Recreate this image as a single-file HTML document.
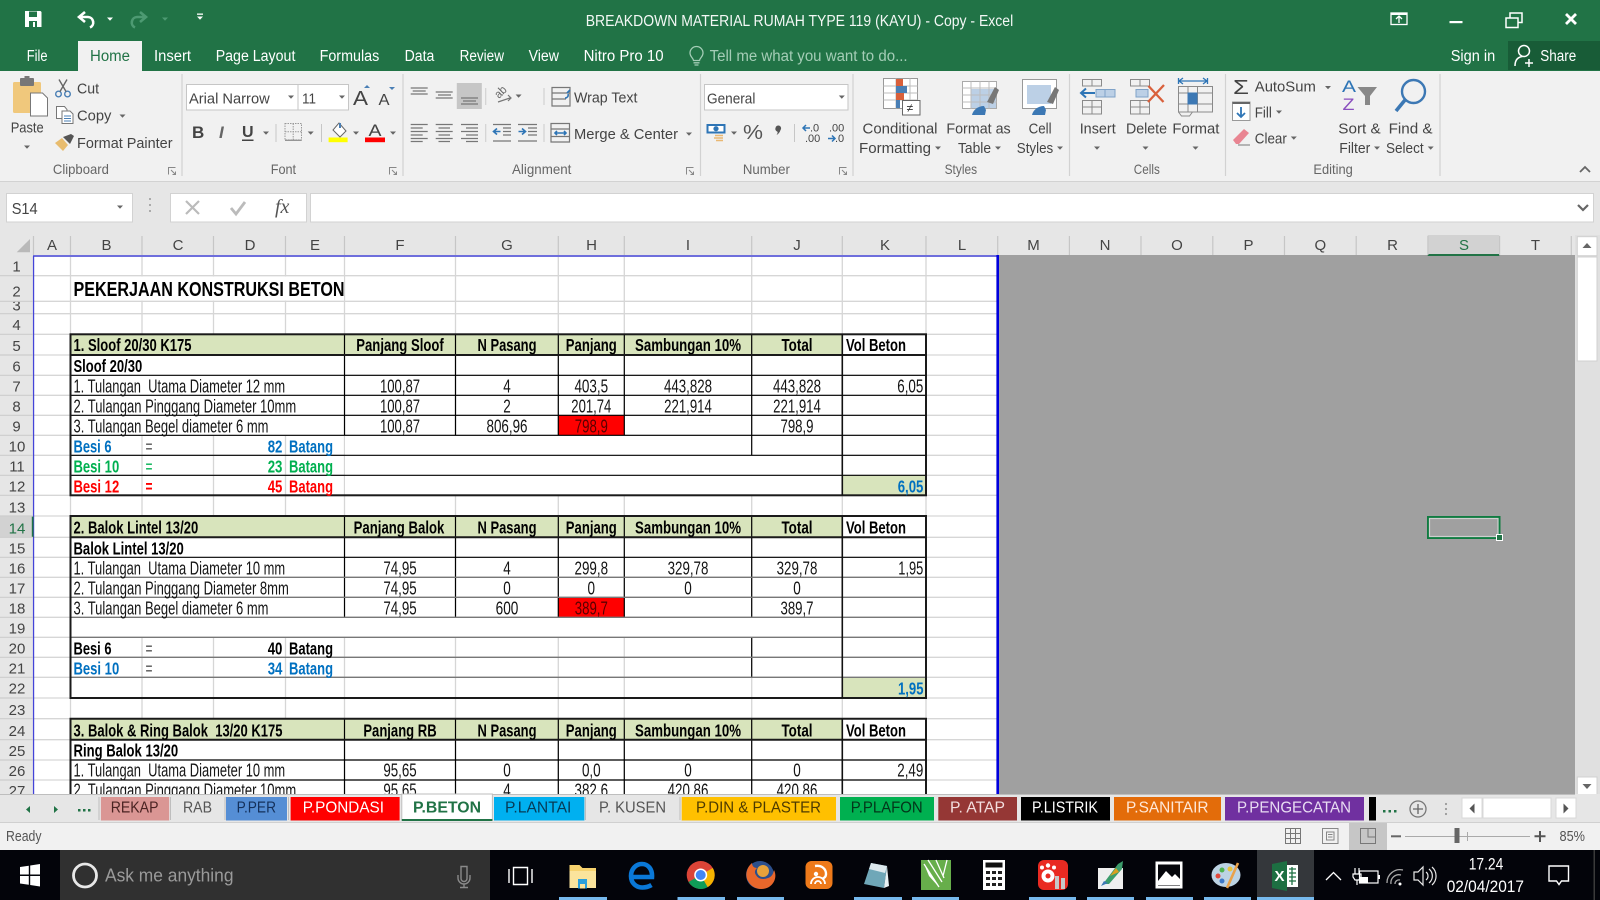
<!DOCTYPE html>
<html lang="en"><head><meta charset="utf-8"><title>BREAKDOWN MATERIAL RUMAH TYPE 119 (KAYU) - Copy - Excel</title>
<style>
html,body{margin:0;padding:0;background:#E6E6E6;width:1600px;height:900px;overflow:hidden}
svg{display:block;position:absolute;left:0;top:0;filter:blur(.3px)}
text{font-family:"Liberation Sans",Arial,sans-serif;white-space:pre}
.s{font-size:18px;fill:#151515}
.b{font-size:17.5px;font-weight:700;fill:#000}
.m{text-anchor:middle}
.bl{fill:#0070C0}.gr{fill:#00B050}.rd{fill:#FF0000}
.h{font-size:15px;fill:#444;text-anchor:middle}
.r{font-size:15px;fill:#444}
.t{font-size:15.5px;fill:#fff}
.g{font-size:14px;fill:#666}
.tb{font-size:15.5px}
</style></head><body>
<svg xmlns="http://www.w3.org/2000/svg" width="1600" height="900" viewBox="0 0 1600 900">
<defs>
<path id="a" d="M-3 -1.5h6l-3 3.2z" fill="#666"/>
<path id="w" d="M-3 -1.5h6l-3 3.2z" fill="#fff"/>
</defs>
<!-- base -->
<rect width="1600" height="900" fill="#E6E6E6"/>
<rect width="1600" height="71" fill="#217346"/>
<rect y="71" width="1600" height="110" fill="#F1F1F1"/>
<rect y="181" width="1600" height="1" fill="#D2D2D2"/>
<rect x="78" y="41" width="64" height="30" fill="#F1F1F1"/>
<rect x="1508" y="41" width="92" height="29" fill="#185C37"/>

<!-- QAT -->
<path d="M25 11h15.500l1 1v15h-16.500z" fill="#fff"/><rect x="29" y="11.500" width="8" height="5.500" fill="#217346"/><rect x="29" y="21" width="8" height="6" fill="#217346"/><rect x="33" y="22" width="2" height="5" fill="#fff"/>
<path d="M85 12l-6 5 6 5M79 17h9a5.500 5.500 0 0 1 2 10.500" fill="none" stroke="#fff" stroke-width="2.600"/>
<use href="#w" x="110" y="19"/>
<path d="M140 12l6 5-6 5M146 17h-9a5.500 5.500 0 0 0-2 10.500" fill="none" stroke="#4D9A72" stroke-width="2.600"/>
<path d="M162 17.500h6l-3 3.200z" fill="#4D9A72"/>
<rect x="197" y="13.500" width="6" height="1.300" fill="#fff"/><use href="#w" x="200" y="18"/>
<text class="t" x="585.700" y="26" textLength="427.500" lengthAdjust="spacingAndGlyphs" fill-opacity=".95">BREAKDOWN MATERIAL RUMAH TYPE 119 (KAYU) - Copy - Excel</text>
<!-- window controls -->
<rect x="1391" y="13" width="16" height="11.500" fill="none" stroke="#fff" stroke-width="1.300"/><rect x="1391" y="13" width="16" height="2" fill="#fff"/><path d="M1399 23v-6M1396 19l3-3 3 3" fill="none" stroke="#fff" stroke-width="1.300"/>
<rect x="1449.500" y="21" width="13" height="2.200" fill="#fff"/>
<rect x="1506" y="18" width="12" height="9.500" fill="none" stroke="#fff" stroke-width="1.500"/><path d="M1510 17.500v-4.500h12v9.500h-4" fill="none" stroke="#fff" stroke-width="1.500"/>
<path d="M1566 14l10 10M1576 14l-10 10" stroke="#fff" stroke-width="2.800"/>
<!-- tabs -->
<g class="t">
<text class="t" x="26.800" y="61" textLength="20.700" lengthAdjust="spacingAndGlyphs">File</text>
<text class="t" x="90" y="61" textLength="40" lengthAdjust="spacingAndGlyphs" style="fill:#217346">Home</text>
<text class="t" x="154" y="61" textLength="37" lengthAdjust="spacingAndGlyphs">Insert</text>
<text class="t" x="215.700" y="61" textLength="79.700" lengthAdjust="spacingAndGlyphs">Page Layout</text>
<text class="t" x="319.600" y="61" textLength="59.700" lengthAdjust="spacingAndGlyphs">Formulas</text>
<text class="t" x="404.600" y="61" textLength="29.700" lengthAdjust="spacingAndGlyphs">Data</text>
<text class="t" x="459.600" y="61" textLength="44.400" lengthAdjust="spacingAndGlyphs">Review</text>
<text class="t" x="528.600" y="61" textLength="30.400" lengthAdjust="spacingAndGlyphs">View</text>
<text class="t" x="583.600" y="61" textLength="80" lengthAdjust="spacingAndGlyphs">Nitro Pro 10</text>
<text class="t" x="709.600" y="61" textLength="198" lengthAdjust="spacingAndGlyphs" style="fill:#A4CDB6">Tell me what you want to do...</text>
<text class="t" x="1450.700" y="61" textLength="44.500" lengthAdjust="spacingAndGlyphs">Sign in</text>
<text class="t" x="1540.300" y="61" textLength="36" lengthAdjust="spacingAndGlyphs">Share</text>
</g>
<path d="M693.500 60.500c-.2-2.500-3.500-3.800-3.500-7.500a6.500 6.500 0 0 1 13 0c0 3.700-3.300 5-3.500 7.500zM693.500 62.800h6M694.500 65h4" fill="none" stroke="#A4CDB6" stroke-width="1.300"/>
<circle cx="1524" cy="51" r="5.500" fill="none" stroke="#fff" stroke-width="1.500"/><path d="M1515 66c0-6 3-9 7.500-9.500M1525 63h8M1529 59v8" fill="none" stroke="#fff" stroke-width="1.500"/>

<!-- ribbon separators -->
<path d="M182 74v102M403 74v102M700.500 74v102M853 74v102M1069.500 74v102M1225.500 74v102M1440 74v102" stroke="#D2D2D2" stroke-width="1.200"/>
<!-- group labels -->
<text class="g" x="52.900" y="174" textLength="56" lengthAdjust="spacingAndGlyphs">Clipboard</text>
<text class="g" x="270.700" y="174" textLength="25.400" lengthAdjust="spacingAndGlyphs">Font</text>
<text class="g" x="512" y="174" textLength="59.400" lengthAdjust="spacingAndGlyphs">Alignment</text>
<text class="g" x="742.900" y="174" textLength="47" lengthAdjust="spacingAndGlyphs">Number</text>
<text class="g" x="944.600" y="174" textLength="32.500" lengthAdjust="spacingAndGlyphs">Styles</text>
<text class="g" x="1133.800" y="174" textLength="26" lengthAdjust="spacingAndGlyphs">Cells</text>
<text class="g" x="1313.400" y="174" textLength="39.400" lengthAdjust="spacingAndGlyphs">Editing</text>
<g fill="none" stroke="#888" stroke-width="1"><path d="M168.500 174.500v-7h7M171 170l4 4M175.500 171.500v3h-3"/><path d="M389.500 174.500v-7h7M392 170l4 4M396.500 171.500v3h-3"/><path d="M686.500 174.500v-7h7M689 170l4 4M693.500 171.500v3h-3"/><path d="M839.500 174.500v-7h7M842 170l4 4M846.500 171.500v3h-3"/></g>
<path d="M1580 172l5-5 5 5" fill="none" stroke="#666" stroke-width="1.800"/>

<!-- clipboard -->
<rect x="13" y="82" width="28" height="31" rx="1.500" fill="#F0C87C"/><rect x="20" y="78" width="14" height="8" rx="1" fill="#777"/><rect x="24.500" y="76" width="5" height="4" fill="#777"/>
<path d="M30.500 93h12l5 5v18h-17z" fill="#fff" stroke="#777" stroke-width="1"/>
<text class="r" x="10.700" y="132.300" textLength="33" lengthAdjust="spacingAndGlyphs">Paste</text><use href="#a" x="27" y="147"/>
<g fill="none" stroke-width="1.400"><circle cx="58.500" cy="94" r="2.800" stroke="#4A7FB5"/><circle cx="67.500" cy="94" r="2.800" stroke="#4A7FB5"/><path d="M60 91.500l7-12M66 91.500l-7-12" stroke="#666"/></g>
<text class="r" x="77" y="93.300" textLength="22" lengthAdjust="spacingAndGlyphs">Cut</text>
<path d="M56.500 106.500h8l2.500 3v9h-10.500z" fill="#fff" stroke="#777"/><path d="M62 111h8l3 3v9.500h-11z" fill="#fff" stroke="#777"/><path d="M64 116h7M64 118.500h7M64 121h7" stroke="#4A7FB5"/>
<text class="r" x="77" y="120.500" textLength="34.400" lengthAdjust="spacingAndGlyphs">Copy</text><use href="#a" x="122.500" y="116"/>
<path d="M55 143l7-5 6 7-5 6z" fill="#E8BC6E"/><path d="M63 137l8-3 3 2-4 8z" fill="#555"/>
<text class="r" x="77" y="148" textLength="95.500" lengthAdjust="spacingAndGlyphs">Format Painter</text>

<!-- font -->
<rect x="186.500" y="84.500" width="162" height="25.500" fill="#fff" stroke="#C6C6C6"/><path d="M298 84v26" stroke="#C6C6C6"/>
<text class="r" x="189" y="103.300" textLength="80.700" lengthAdjust="spacingAndGlyphs">Arial Narrow</text><use href="#a" x="291" y="97"/>
<text class="r" x="302" y="103.300" textLength="14" lengthAdjust="spacingAndGlyphs">11</text><use href="#a" x="342" y="97"/>
<text class="r" x="353" y="105" style="font-size:20px" textLength="15" lengthAdjust="spacingAndGlyphs">A</text><path d="M364 88l3-3 3 3z" fill="#4A7FB5"/>
<text class="r" x="378.500" y="105" style="font-size:16px" textLength="11" lengthAdjust="spacingAndGlyphs">A</text><path d="M389 87l3 3 3-3z" fill="#4A7FB5"/>
<text x="192" y="138" style="font-size:17px;font-weight:700;fill:#444">B</text>
<text x="219" y="138" style="font-size:17px;font-style:italic;font-weight:700;fill:#666">I</text>
<text x="242" y="137" style="font-size:16px;font-weight:700;fill:#444">U</text><rect x="242" y="139.500" width="11.500" height="1.500" fill="#444"/><use href="#a" x="266" y="133"/>
<path d="M276 124v18M321.500 124v18" stroke="#C6C6C6"/>
<path d="M285 123.500h16.500v16.500h-16.500zM293.200 123.500v16.500M285 131.700h16.500" fill="none" stroke="#999" stroke-dasharray="1.500 1"/><path d="M285 140.200h16.500" stroke="#777"/><use href="#a" x="310.700" y="133"/>
<path d="M339 123l7 8-6 6-7-7z" fill="#fff" stroke="#666"/><path d="M340 123v5" stroke="#4A7FB5" stroke-width="2"/>
<rect x="328.600" y="137.500" width="19" height="4.700" fill="#FFFF00"/><use href="#a" x="356" y="133"/>
<text x="368.500" y="136" style="font-size:17px;fill:#444" textLength="13" lengthAdjust="spacingAndGlyphs">A</text><rect x="365" y="137.500" width="20" height="4.700" fill="#FF0000"/><use href="#a" x="393" y="133"/>

<!-- alignment -->
<rect x="456.800" y="83" width="25" height="26" fill="#C6C6C6"/>
<path d="M485.700 88v17M485.700 124v18M544 88v17M544 124v18" stroke="#D2D2D2" stroke-width="1.200"/>
<g stroke="#777" stroke-width="1.200" fill="none">
<path d="M410.700 88h17M412.700 91h13M410.700 94h17"/>
<path d="M435.700 92h17M438 95h13M435.700 98h17"/>
<path d="M461 98h17M463 101h13M461 104h17"/>
<path d="M410.700 124.500h17M410.700 128h12M410.700 131.500h17M410.700 135h12M410.700 138.500h17M410.700 141.500h12"/>
<path d="M435.700 124.500h17M438.500 128h11.500M435.700 131.500h17M438.500 135h11.500M435.700 138.500h17M438.500 141.500h11.500"/>
<path d="M461 124.500h17M466 128h12M461 131.500h17M466 135h12M461 138.500h17M466 141.500h12"/>
<path d="M493 124.500h18M503 128h8M503 131.500h8M503 135h8M493 141h18M518 124.500h19M518 141h19M528 128h9M528 131.500h9M528 135h9"/>
<path d="M552 87.500h18v18.500h-18zM552 93h18M552 99h14"/><path d="M551 123.500h18.500v18.500h-18.500zM551 129h18.500M551 136.500h18.500"/>
<path d="M498 102l12-4M508 95l3 3-3 3"/></g>
<text x="0" y="0" transform="translate(499 99) rotate(-45)" style="font-size:12px;fill:#666" textLength="12" lengthAdjust="spacingAndGlyphs">ab</text>
<use href="#a" x="518.600" y="96"/>
<path d="M493.500 131.500h7M497 128.500l-3.500 3 3.500 3M518.500 131.500h7M522 128.500l3.500 3-3.500 3M555 133h11M557 131l-2 2 2 2M564 131l2 2-2 2M567 93l3-3M565 98a3 3 0 0 0 3-4" fill="none" stroke="#2E75B6" stroke-width="1.600"/>
<text class="r" x="574" y="102.300" textLength="63.500" lengthAdjust="spacingAndGlyphs">Wrap Text</text>
<text class="r" x="574" y="139" textLength="104" lengthAdjust="spacingAndGlyphs">Merge &amp; Center</text><use href="#a" x="689" y="134"/>

<!-- number -->
<rect x="704.500" y="84.500" width="143.500" height="25.500" fill="#fff" stroke="#C6C6C6"/>
<text class="r" x="707" y="103.300" textLength="48.400" lengthAdjust="spacingAndGlyphs">General</text><use href="#a" x="841.800" y="97"/>
<rect x="706.500" y="124" width="19" height="9.500" fill="#2E75B6"/><rect x="708.500" y="126" width="15" height="5.500" fill="#fff"/><circle cx="716" cy="128.700" r="2.600" fill="#2E75B6"/>
<g fill="none" stroke="#E9B873" stroke-width="1.400"><path d="M715 135.500h8M714 138h9M716 140.500h7"/></g><use href="#a" x="734" y="133"/>
<text x="743" y="139" style="font-size:20px;fill:#555" textLength="20" lengthAdjust="spacingAndGlyphs">%</text>
<path d="M775.500 128a2.800 2.800 0 1 1 5 2c-.5 2-2 4-4 5 1-1.500 1.300-2.500 1-3.300a2.800 2.800 0 0 1-2-3.700z" fill="#555"/>
<path d="M794.500 124v18" stroke="#C6C6C6"/>
<text x="810" y="131.500" style="font-size:11px;fill:#444">.0</text><text x="805" y="142" style="font-size:11px;fill:#444">.00</text>
<text x="829" y="131.500" style="font-size:11px;fill:#444">.00</text><text x="835" y="142" style="font-size:11px;fill:#444">.0</text>
<path d="M803 128h7M806 125l-3 3 3 3M828 138.500h7M832 135.500l3 3-3 3" fill="none" stroke="#2E75B6" stroke-width="1.500"/>

<!-- styles -->
<g>
<rect x="883.500" y="78.500" width="34" height="30" fill="#fff" stroke="#999"/><path d="M883.500 86h34M883.500 93h34M883.500 100h34M896 78.500v30M910 78.500v30" stroke="#BDBDBD"/>
<rect x="896" y="79" width="7" height="7" fill="#D9603B"/><rect x="896" y="86" width="11" height="7" fill="#4A7FB5"/><rect x="896" y="93" width="8" height="7" fill="#D9603B"/><rect x="896" y="100" width="4" height="8" fill="#4A7FB5"/>
<rect x="902.500" y="100.500" width="17.500" height="14.500" fill="#fff" stroke="#666"/><text x="906.500" y="112" style="font-size:12px;fill:#333">≠</text>
<rect x="962.500" y="81.500" width="34" height="27" fill="#fff" stroke="#AAA"/><rect x="971" y="89" width="25" height="19" fill="#BCD0E6"/><path d="M962.500 88h34M962.500 95h34M962.500 102h34M971 81.500v27M980 81.500v27M989 81.500v27" stroke="#BDBDBD"/><path d="M987 102l8-15 4 3-6 14z" fill="#777"/><path d="M972 115c1-5 6-9 12-9l2 4-1 5z" fill="#3C78B4"/>
<rect x="1022.500" y="79.500" width="34" height="29" fill="#fff" stroke="#999"/><rect x="1027" y="85" width="24" height="19" fill="#BCD0E6"/><path d="M1047 102l8-15 4 3-6 14z" fill="#777"/><path d="M1032 115c1-5 6-9 12-9l2 4-1 5z" fill="#3C78B4"/>
</g>
<text class="r" x="862.500" y="133.300" textLength="75" lengthAdjust="spacingAndGlyphs">Conditional</text>
<text class="r" x="859" y="153" textLength="72" lengthAdjust="spacingAndGlyphs">Formatting</text><use href="#a" x="938" y="148"/>
<text class="r" x="946.400" y="133.300" textLength="64.300" lengthAdjust="spacingAndGlyphs">Format as</text>
<text class="r" x="958" y="153" textLength="33" lengthAdjust="spacingAndGlyphs">Table</text><use href="#a" x="998" y="148"/>
<text class="r" x="1028.600" y="133.300" textLength="23" lengthAdjust="spacingAndGlyphs">Cell</text>
<text class="r" x="1016.800" y="153" textLength="36.400" lengthAdjust="spacingAndGlyphs">Styles</text><use href="#a" x="1060" y="148"/>

<!-- cells -->
<g fill="none" stroke="#8A8A8A">
<path d="M1082.500 79.500h19v6.500h-19zM1092 79.500v6.500M1082.500 100.500h19v13.500h-19zM1082.500 107h19M1092 100.500v13.500"/>
<path d="M1130.500 79.500h19v6.500h-19zM1140 79.500v6.500M1130.500 100.500h19v13.500h-19zM1130.500 107h19M1140 100.500v13.500"/>
<path d="M1178.500 86.500h34v25.500h-34zM1178.500 93h34M1178.500 104h34M1188 86.500v25.500M1197.500 86.500v25.500M1178.500 112l3 4h8l3-4"/>
</g>
<rect x="1096" y="89.500" width="9" height="7.500" fill="#BCD0E6" stroke="#7FA2C8"/><rect x="1105" y="89.500" width="10" height="7.500" fill="#BCD0E6" stroke="#7FA2C8"/><path d="M1095 93h-13M1086 88.500l-5 4.500 5 4.500" fill="none" stroke="#2E75B6" stroke-width="2"/>
<rect x="1136" y="89.500" width="12" height="7.500" fill="#BCD0E6" stroke="#7FA2C8"/><path d="M1148.500 86l15 16M1164 85l-16 17" stroke="#D9603B" stroke-width="2.300"/>
<rect x="1187.500" y="92.500" width="10" height="12" fill="#3C78B4"/><path d="M1179 81h28M1183 78l-4 3 4 3M1203 78l4 3-4 3M1178.500 78v6M1207.500 78v6" fill="none" stroke="#2E75B6" stroke-width="1.300"/>
<text class="r" x="1079.700" y="133.300" textLength="36" lengthAdjust="spacingAndGlyphs">Insert</text><use href="#a" x="1097" y="148"/>
<text class="r" x="1126" y="133.300" textLength="41" lengthAdjust="spacingAndGlyphs">Delete</text><use href="#a" x="1145.500" y="148"/>
<text class="r" x="1172.400" y="133.300" textLength="47" lengthAdjust="spacingAndGlyphs">Format</text><use href="#a" x="1195.500" y="148"/>

<!-- editing -->
<text x="1233" y="94" style="font-size:20px;fill:#444" textLength="16" lengthAdjust="spacingAndGlyphs">Σ</text>
<text class="r" x="1254.800" y="91.700" textLength="61" lengthAdjust="spacingAndGlyphs">AutoSum</text><use href="#a" x="1328" y="87.500"/>
<rect x="1232.500" y="102" width="17.500" height="18.500" fill="#fff" stroke="#999"/><rect x="1232.500" y="102" width="17.500" height="2" fill="#666"/><path d="M1241 107v10M1237 113l4 4 4-4" fill="none" stroke="#2E75B6" stroke-width="1.800"/>
<text class="r" x="1254.800" y="117.300" textLength="17" lengthAdjust="spacingAndGlyphs">Fill</text><use href="#a" x="1279" y="112"/>
<path d="M1233 140l11-11 5 4-10 11h-3z" fill="#E98592"/><path d="M1238 145h12" stroke="#777"/>
<text class="r" x="1254.800" y="143.300" textLength="32" lengthAdjust="spacingAndGlyphs">Clear</text><use href="#a" x="1293.800" y="138"/>
<text x="1342" y="92" style="font-size:17px;fill:#2E75B6" textLength="14" lengthAdjust="spacingAndGlyphs">A</text>
<text x="1342.500" y="110" style="font-size:17px;fill:#8A4FBF" textLength="12" lengthAdjust="spacingAndGlyphs">Z</text>
<path d="M1357.500 87h19.500l-7 9v9h-5v-9z" fill="#888"/>
<text class="r" x="1338.300" y="133.300" textLength="42.400" lengthAdjust="spacingAndGlyphs">Sort &amp;</text>
<text class="r" x="1339.300" y="153" textLength="31" lengthAdjust="spacingAndGlyphs">Filter</text><use href="#a" x="1377" y="148"/>
<circle cx="1413.500" cy="91.500" r="11.500" fill="none" stroke="#3C78B4" stroke-width="2.400"/><path d="M1405 100l-9 11" stroke="#3C78B4" stroke-width="3.600"/>
<text class="r" x="1388.600" y="133.300" textLength="44" lengthAdjust="spacingAndGlyphs">Find &amp;</text>
<text class="r" x="1386" y="153" textLength="37.600" lengthAdjust="spacingAndGlyphs">Select</text><use href="#a" x="1430.700" y="148"/>

<!-- formula bar -->
<rect x="6.500" y="193.500" width="126" height="28.500" fill="#fff" stroke="#D2D2D2"/>
<text x="11.700" y="214" style="font-size:16px;fill:#444" textLength="26" lengthAdjust="spacingAndGlyphs">S14</text><use href="#a" x="120" y="207"/>
<circle cx="150" cy="199" r="1" fill="#999"/><circle cx="150" cy="205" r="1" fill="#999"/><circle cx="150" cy="211" r="1" fill="#999"/>
<rect x="170.500" y="193.500" width="136" height="28.500" fill="#fff" stroke="#D2D2D2"/>
<path d="M186 201l13 13M199 201l-13 13" stroke="#BBB" stroke-width="2.200"/><path d="M231 208l5 6 9-12" fill="none" stroke="#BBB" stroke-width="2.800"/>
<text x="275" y="213" style="font-size:20px;font-family:'Liberation Serif',serif;font-style:italic;fill:#555">fx</text>
<rect x="310.500" y="193.500" width="1283" height="28.500" fill="#fff" stroke="#D2D2D2"/>
<path d="M1578 205l5 5 5-5" fill="none" stroke="#666" stroke-width="2.200"/>

<!-- sheet -->
<rect x="33" y="256" width="964" height="538" fill="#fff"/>
<rect x="999" y="255" width="576" height="539" fill="#A0A0A0"/>
<g stroke="#D6D6D6" stroke-width="1.300">
<path d="M70.500 256v538M142 256v538M213.500 256v538M285.500 256v538M344.500 256v538M455.500 256v538M558.300 256v538M624.300 256v538M751.700 256v538M842.300 256v538M926 256v538"/>
<path d="M33 275.700h964M33 301.300h964M33 313.700h964M33 334.300h964M33 355h964M33 375.300h964M33 395.300h964M33 415.300h964M33 435.300h964M33 455.300h964M33 475.300h964M33 495.300h964M33 516h964M33 537.300h964M33 557.300h964M33 577.300h964M33 597.300h964M33 617.300h964M33 637.300h964M33 657.300h964M33 677.300h964M33 698h964M33 718.700h964M33 739.700h964M33 760h964M33 780h964"/>
</g>
<!-- overflow masks -->
<rect x="71.500" y="276.500" width="272.500" height="24" fill="#fff"/>
<rect x="71" y="355.500" width="273" height="79.500" fill="#fff"/>
<rect x="345" y="436" width="497" height="59" fill="#fff"/>
<rect x="71" y="537.500" width="273" height="80" fill="#fff"/>
<rect x="71" y="618" width="771" height="19" fill="#fff"/>
<rect x="71" y="740" width="273" height="54" fill="#fff"/>
<!-- fills -->
<rect x="71" y="335" width="771" height="20" fill="#D8E4BC"/>
<rect x="71" y="516.500" width="771" height="21" fill="#D8E4BC"/>
<rect x="71" y="719" width="771" height="21" fill="#D8E4BC"/>
<rect x="558.300" y="415.300" width="66" height="20" fill="#FF0000"/>
<rect x="558.300" y="597.300" width="66" height="20" fill="#FF0000"/>
<rect x="842.300" y="475.300" width="83.700" height="20" fill="#D8E4BC"/>
<rect x="842.300" y="677.300" width="83.700" height="20.700" fill="#D8E4BC"/>
<!-- table lines -->
<g fill="none" stroke="#000" stroke-width="1.200">
<path d="M70.500 375.300h855.500M70.500 395.300h855.500M70.500 415.300h855.500M70.500 435.300h855.500M70.500 455.300h855.500M70.500 475.300h855.500"/>
<path d="M344.500 334.300V435.300M455.500 334.300V435.300M558.300 334.300V435.300M624.300 334.300V435.300M751.700 334.300V455.300"/>
<path d="M70.500 557.300h855.500"/>
<path d="M344.500 516V617.300M455.500 516V617.300M558.300 516V617.300M624.300 516V617.300M751.700 516V617.300M751.700 637.300V677.300"/>
<path d="M70.500 760h855.500M70.500 780h855.500"/>
<path d="M344.500 718.700V794M455.500 718.700V794M558.300 718.700V794M624.300 718.700V794M751.700 718.700V794"/>
</g>
<path d="M70.500 577.300h855.500M70.500 597.300h855.500M70.500 617.300h855.500M70.500 637.300h771.800M842.300 637.300h83.700M70.500 657.300h855.500M70.500 677.300h855.500" fill="none" stroke="#777" stroke-width="1.400"/>
<g fill="none" stroke="#1A1A1A" stroke-width="2">
<rect x="70.500" y="334.300" width="855.500" height="161"/><path d="M70.500 355h855.500"/>
<rect x="70.500" y="516" width="855.500" height="182"/><path d="M70.500 537.300h855.500"/>
<path d="M70.500 794V718.700H926V794M70.500 739.700h855.500"/>
</g>
<path d="M842.300 334.300V495.300M842.300 516V698M842.300 718.700V794" stroke="#111" stroke-width="1.600"/>
<!-- page border -->
<path d="M33 256h964" stroke="#6E6EDC" stroke-width="2"/>
<path d="M33.500 256V794" stroke="#4444D8" stroke-width="1.400"/>
<path d="M997.700 255V794" stroke="#0000DC" stroke-width="2.600"/>

<!-- sheet text -->
<text class="b" x="73.500" y="296" style="font-size:20px" textLength="271" lengthAdjust="spacingAndGlyphs">PEKERJAAN KONSTRUKSI BETON</text>

<text class="b" x="73.500" y="351" textLength="118" lengthAdjust="spacingAndGlyphs">1. Sloof 20/30 K175</text>
<text class="b m" x="400" y="351" textLength="87.500" lengthAdjust="spacingAndGlyphs">Panjang Sloof</text>
<text class="b m" x="507" y="351" textLength="59" lengthAdjust="spacingAndGlyphs">N Pasang</text>
<text class="b m" x="591.300" y="351" textLength="51" lengthAdjust="spacingAndGlyphs">Panjang</text>
<text class="b m" x="688" y="351" textLength="106" lengthAdjust="spacingAndGlyphs">Sambungan 10%</text>
<text class="b m" x="797" y="351" textLength="31" lengthAdjust="spacingAndGlyphs">Total</text>
<text class="b" x="846" y="351" textLength="60" lengthAdjust="spacingAndGlyphs">Vol Beton</text>
<text class="b" x="73.500" y="372" textLength="68.700" lengthAdjust="spacingAndGlyphs">Sloof 20/30</text>

<text class="s" x="73.500" y="392.300" textLength="211.700" lengthAdjust="spacingAndGlyphs">1. Tulangan  Utama Diameter 12 mm</text>
<text class="s m" x="400" y="392.300" textLength="40" lengthAdjust="spacingAndGlyphs">100,87</text>
<text class="s m" x="507" y="392.300" textLength="7.500" lengthAdjust="spacingAndGlyphs">4</text>
<text class="s m" x="591.300" y="392.300" textLength="33.700" lengthAdjust="spacingAndGlyphs">403,5</text>
<text class="s m" x="688" y="392.300" textLength="48" lengthAdjust="spacingAndGlyphs">443,828</text>
<text class="s m" x="797" y="392.300" textLength="48" lengthAdjust="spacingAndGlyphs">443,828</text>
<text class="s" x="897.300" y="392.300" textLength="26" lengthAdjust="spacingAndGlyphs">6,05</text>

<text class="s" x="73.500" y="412.300" textLength="222.700" lengthAdjust="spacingAndGlyphs">2. Tulangan Pinggang Diameter 10mm</text>
<text class="s m" x="400" y="412.300" textLength="40" lengthAdjust="spacingAndGlyphs">100,87</text>
<text class="s m" x="507" y="412.300" textLength="7.500" lengthAdjust="spacingAndGlyphs">2</text>
<text class="s m" x="591.300" y="412.300" textLength="40" lengthAdjust="spacingAndGlyphs">201,74</text>
<text class="s m" x="688" y="412.300" textLength="47.700" lengthAdjust="spacingAndGlyphs">221,914</text>
<text class="s m" x="797" y="412.300" textLength="47.700" lengthAdjust="spacingAndGlyphs">221,914</text>

<text class="s" x="73.500" y="432.300" textLength="195" lengthAdjust="spacingAndGlyphs">3. Tulangan Begel diameter 6 mm</text>
<text class="s m" x="400" y="432.300" textLength="40" lengthAdjust="spacingAndGlyphs">100,87</text>
<text class="s m" x="507" y="432.300" textLength="41" lengthAdjust="spacingAndGlyphs">806,96</text>
<text class="s m" x="591.300" y="432.300" textLength="33" lengthAdjust="spacingAndGlyphs" style="fill:#5A0000">798,9</text>
<text class="s m" x="797" y="432.300" textLength="33" lengthAdjust="spacingAndGlyphs">798,9</text>

<text class="b bl" x="73.500" y="452.300" textLength="38" lengthAdjust="spacingAndGlyphs">Besi 6</text><text class="s" x="145.500" y="452.300" textLength="7" lengthAdjust="spacingAndGlyphs" style="fill:#555">=</text><text class="b bl" x="267.700" y="452.300" textLength="14.700" lengthAdjust="spacingAndGlyphs">82</text><text class="b bl" x="289" y="452.300" textLength="44" lengthAdjust="spacingAndGlyphs">Batang</text>
<text class="b gr" x="73.500" y="472.300" textLength="45.700" lengthAdjust="spacingAndGlyphs">Besi 10</text><text class="s" x="145.500" y="472.300" textLength="7" lengthAdjust="spacingAndGlyphs" style="fill:#00B050">=</text><text class="b gr" x="267.700" y="472.300" textLength="14.700" lengthAdjust="spacingAndGlyphs">23</text><text class="b gr" x="289" y="472.300" textLength="44" lengthAdjust="spacingAndGlyphs">Batang</text>
<text class="b rd" x="73.500" y="492.300" textLength="45.700" lengthAdjust="spacingAndGlyphs">Besi 12</text><text class="b rd" x="145.500" y="492.300" textLength="7" lengthAdjust="spacingAndGlyphs">=</text><text class="b rd" x="267.700" y="492.300" textLength="14.700" lengthAdjust="spacingAndGlyphs">45</text><text class="b rd" x="289" y="492.300" textLength="44" lengthAdjust="spacingAndGlyphs">Batang</text>
<text class="b bl" x="897.700" y="492.300" textLength="25.700" lengthAdjust="spacingAndGlyphs">6,05</text>

<text class="b" x="73.500" y="533.300" textLength="124.700" lengthAdjust="spacingAndGlyphs">2. Balok Lintel 13/20</text>
<text class="b m" x="399" y="533.300" textLength="90.700" lengthAdjust="spacingAndGlyphs">Panjang Balok</text>
<text class="b m" x="507" y="533.300" textLength="59" lengthAdjust="spacingAndGlyphs">N Pasang</text>
<text class="b m" x="591.300" y="533.300" textLength="51" lengthAdjust="spacingAndGlyphs">Panjang</text>
<text class="b m" x="688" y="533.300" textLength="106" lengthAdjust="spacingAndGlyphs">Sambungan 10%</text>
<text class="b m" x="797" y="533.300" textLength="31" lengthAdjust="spacingAndGlyphs">Total</text>
<text class="b" x="846" y="533.300" textLength="60" lengthAdjust="spacingAndGlyphs">Vol Beton</text>
<text class="b" x="73.500" y="554.300" textLength="110.300" lengthAdjust="spacingAndGlyphs">Balok Lintel 13/20</text>

<text class="s" x="73.500" y="574.500" textLength="211.700" lengthAdjust="spacingAndGlyphs">1. Tulangan  Utama Diameter 10 mm</text>
<text class="s m" x="400" y="574.500" textLength="33.300" lengthAdjust="spacingAndGlyphs">74,95</text>
<text class="s m" x="507" y="574.500" textLength="7.500" lengthAdjust="spacingAndGlyphs">4</text>
<text class="s m" x="591.300" y="574.500" textLength="33.500" lengthAdjust="spacingAndGlyphs">299,8</text>
<text class="s m" x="688" y="574.500" textLength="40.700" lengthAdjust="spacingAndGlyphs">329,78</text>
<text class="s m" x="797" y="574.500" textLength="40.700" lengthAdjust="spacingAndGlyphs">329,78</text>
<text class="s" x="898.300" y="574.500" textLength="25" lengthAdjust="spacingAndGlyphs">1,95</text>

<text class="s" x="73.500" y="594.500" textLength="215.300" lengthAdjust="spacingAndGlyphs">2. Tulangan Pinggang Diameter 8mm</text>
<text class="s m" x="400" y="594.500" textLength="33.300" lengthAdjust="spacingAndGlyphs">74,95</text>
<text class="s m" x="507" y="594.500" textLength="7.500" lengthAdjust="spacingAndGlyphs">0</text><text class="s m" x="591.300" y="594.500" textLength="7.500" lengthAdjust="spacingAndGlyphs">0</text><text class="s m" x="688" y="594.500" textLength="7.500" lengthAdjust="spacingAndGlyphs">0</text><text class="s m" x="797" y="594.500" textLength="7.500" lengthAdjust="spacingAndGlyphs">0</text>

<text class="s" x="73.500" y="614.500" textLength="195" lengthAdjust="spacingAndGlyphs">3. Tulangan Begel diameter 6 mm</text>
<text class="s m" x="400" y="614.500" textLength="33.300" lengthAdjust="spacingAndGlyphs">74,95</text>
<text class="s m" x="507" y="614.500" textLength="22.700" lengthAdjust="spacingAndGlyphs">600</text>
<text class="s m" x="591.300" y="614.500" textLength="33" lengthAdjust="spacingAndGlyphs" style="fill:#5A0000">389,7</text>
<text class="s m" x="797" y="614.500" textLength="33" lengthAdjust="spacingAndGlyphs">389,7</text>

<text class="b" x="73.500" y="654.300" textLength="38" lengthAdjust="spacingAndGlyphs">Besi 6</text><text class="s" x="145.500" y="654.300" textLength="7" lengthAdjust="spacingAndGlyphs" style="fill:#555">=</text><text class="b" x="267.700" y="654.300" textLength="14.700" lengthAdjust="spacingAndGlyphs">40</text><text class="b" x="289" y="654.300" textLength="44" lengthAdjust="spacingAndGlyphs">Batang</text>
<text class="b bl" x="73.500" y="674.300" textLength="45.700" lengthAdjust="spacingAndGlyphs">Besi 10</text><text class="s" x="145.500" y="674.300" textLength="7" lengthAdjust="spacingAndGlyphs" style="fill:#555">=</text><text class="b bl" x="267.700" y="674.300" textLength="14.700" lengthAdjust="spacingAndGlyphs">34</text><text class="b bl" x="289" y="674.300" textLength="44" lengthAdjust="spacingAndGlyphs">Batang</text>
<text class="b bl" x="898" y="694.300" textLength="25.500" lengthAdjust="spacingAndGlyphs">1,95</text>

<text class="b" x="73.500" y="736.300" textLength="209" lengthAdjust="spacingAndGlyphs">3. Balok &amp; Ring Balok  13/20 K175</text>
<text class="b m" x="400" y="736.300" textLength="73.300" lengthAdjust="spacingAndGlyphs">Panjang RB</text>
<text class="b m" x="507" y="736.300" textLength="59" lengthAdjust="spacingAndGlyphs">N Pasang</text>
<text class="b m" x="591.300" y="736.300" textLength="51" lengthAdjust="spacingAndGlyphs">Panjang</text>
<text class="b m" x="688" y="736.300" textLength="106" lengthAdjust="spacingAndGlyphs">Sambungan 10%</text>
<text class="b m" x="797" y="736.300" textLength="31" lengthAdjust="spacingAndGlyphs">Total</text>
<text class="b" x="846" y="736.300" textLength="60" lengthAdjust="spacingAndGlyphs">Vol Beton</text>
<text class="b" x="73.500" y="756.700" textLength="104.700" lengthAdjust="spacingAndGlyphs">Ring Balok 13/20</text>

<text class="s" x="73.500" y="776.700" textLength="211.700" lengthAdjust="spacingAndGlyphs">1. Tulangan  Utama Diameter 10 mm</text>
<text class="s m" x="400" y="776.700" textLength="33.300" lengthAdjust="spacingAndGlyphs">95,65</text>
<text class="s m" x="507" y="776.700" textLength="7.500" lengthAdjust="spacingAndGlyphs">0</text>
<text class="s m" x="591.300" y="776.700" textLength="18.700" lengthAdjust="spacingAndGlyphs">0,0</text>
<text class="s m" x="688" y="776.700" textLength="7.500" lengthAdjust="spacingAndGlyphs">0</text><text class="s m" x="797" y="776.700" textLength="7.500" lengthAdjust="spacingAndGlyphs">0</text>
<text class="s" x="897.300" y="776.700" textLength="26" lengthAdjust="spacingAndGlyphs">2,49</text>

<text class="s" x="73.500" y="796.700" textLength="222.700" lengthAdjust="spacingAndGlyphs">2. Tulangan Pinggang Diameter 10mm</text>
<text class="s m" x="400" y="796.700" textLength="33.300" lengthAdjust="spacingAndGlyphs">95,65</text>
<text class="s m" x="507" y="796.700" textLength="7.500" lengthAdjust="spacingAndGlyphs">4</text>
<text class="s m" x="591.300" y="796.700" textLength="33.500" lengthAdjust="spacingAndGlyphs">382,6</text>
<text class="s m" x="688" y="796.700" textLength="40.700" lengthAdjust="spacingAndGlyphs">420,86</text>
<text class="s m" x="797" y="796.700" textLength="40.700" lengthAdjust="spacingAndGlyphs">420,86</text>

<!-- selection -->
<rect x="1428" y="517" width="71.500" height="21" fill="none" stroke="#107C41" stroke-width="2"/>
<rect x="1429.500" y="518.500" width="68.500" height="18" fill="none" stroke="#CFCFCF" stroke-width="1.200"/>
<rect x="1496.500" y="534.500" width="6" height="6" fill="#217346" stroke="#fff"/>

<!-- col headers -->
<rect y="235" width="1576" height="20" fill="#E6E6E6"/>
<rect x="1427.700" y="235" width="71.600" height="20" fill="#D2D2D2"/><rect x="1427.700" y="254" width="71.600" height="2" fill="#217346"/>
<path d="M30 239v13.300h-13.300z" fill="#B9B9B9"/>
<path d="M33.500 236v19M70.500 236v19M142 236v19M213.500 236v19M285.500 236v19M344.500 236v19M455.500 236v19M558.300 236v19M624.300 236v19M751.700 236v19M842.300 236v19M926 236v19M997.700 236v19M1069.400 236v19M1141 236v19M1212.800 236v19M1284.500 236v19M1356.200 236v19M1427.900 236v19M1499.600 236v19M1571.300 236v19" stroke="#C6C6C6" stroke-width="1.200"/>
<text class="h" x="52" y="250">A</text><text class="h" x="106.500" y="250">B</text><text class="h" x="178" y="250">C</text><text class="h" x="250" y="250">D</text><text class="h" x="315" y="250">E</text><text class="h" x="400" y="250">F</text><text class="h" x="507" y="250">G</text><text class="h" x="591.500" y="250">H</text><text class="h" x="688" y="250">I</text><text class="h" x="797" y="250">J</text><text class="h" x="885" y="250">K</text><text class="h" x="962" y="250">L</text><text class="h" x="1033.500" y="250">M</text><text class="h" x="1105" y="250">N</text><text class="h" x="1177" y="250">O</text><text class="h" x="1248.500" y="250">P</text><text class="h" x="1320.300" y="250">Q</text><text class="h" x="1392.500" y="250">R</text><text class="h" x="1464" y="250" style="fill:#217346">S</text><text class="h" x="1535.500" y="250">T</text>

<!-- row headers -->
<rect y="255" width="32.800" height="539" fill="#E6E6E6"/>
<rect y="516.500" width="32" height="21" fill="#D2D2D2"/><rect x="31.800" y="516.500" width="1.700" height="21" fill="#217346"/>
<text class="h" x="16.500" y="310.500">3</text>
<rect y="276.500" width="32" height="24.500" fill="#E6E6E6"/>
<path d="M0 275.700h33M0 301.300h33M0 313.700h33M0 334.300h33M0 355h33M0 375.300h33M0 395.300h33M0 415.300h33M0 435.300h33M0 455.300h33M0 475.300h33M0 495.300h33M0 516h33M0 537.300h33M0 557.300h33M0 577.300h33M0 597.300h33M0 617.300h33M0 637.300h33M0 657.300h33M0 677.300h33M0 698h33M0 718.700h33M0 739.700h33M0 760h33M0 780h33" stroke="#CDCDCD" stroke-width="1.200"/>
<text class="h" x="16.500" y="271.500">1</text><text class="h" x="16.500" y="296.300">2</text><text class="h" x="16.500" y="330">4</text><text class="h" x="16.500" y="351">5</text><text class="h" x="16.500" y="371.500">6</text><text class="h" x="16.500" y="391.500">7</text><text class="h" x="16.500" y="411.500">8</text><text class="h" x="16.500" y="431.500">9</text><text class="h" x="17" y="451.500">10</text><text class="h" x="17" y="471.500">11</text><text class="h" x="17" y="491.500">12</text><text class="h" x="17" y="512.500">13</text><text class="h" x="17" y="533.500" style="fill:#217346">14</text><text class="h" x="17" y="553.500">15</text><text class="h" x="17" y="573.500">16</text><text class="h" x="17" y="593.500">17</text><text class="h" x="17" y="613.500">18</text><text class="h" x="17" y="633.500">19</text><text class="h" x="17" y="653.500">20</text><text class="h" x="17" y="673.500">21</text><text class="h" x="17" y="693.500">22</text><text class="h" x="17" y="715">23</text><text class="h" x="17" y="736">24</text><text class="h" x="17" y="756">25</text><text class="h" x="17" y="776">26</text><text class="h" x="17" y="796">27</text>

<!-- vertical scrollbar -->
<rect x="1575" y="235" width="25" height="560" fill="#E0E0E0"/>
<rect x="1577.300" y="236.700" width="19.700" height="19" fill="#fff" stroke="#D0D0D0"/><path d="M1582.500 248l4.500-5 4.500 5z" fill="#666"/>
<rect x="1577.300" y="257" width="19.700" height="104" fill="#fff" stroke="#D0D0D0"/>
<rect x="1577.300" y="777" width="19.700" height="18" fill="#fff" stroke="#D0D0D0"/><path d="M1582.500 784l4.500 5 4.500-5z" fill="#666"/>

<!-- tab bar -->
<rect y="794" width="1600" height="29" fill="#E6E6E6"/>
<rect y="794" width="1575" height="1" fill="#BEBEBE"/>
<rect y="822" width="1600" height="1.200" fill="#D0D0D0"/>
<path d="M30 806v7l-4-3.500zM54 806v7l4-3.500z" fill="#217346"/>
<g fill="#217346"><rect x="78" y="809" width="2.500" height="2.500"/><rect x="83" y="809" width="2.500" height="2.500"/><rect x="88" y="809" width="2.500" height="2.500"/></g>
<path d="M99 797v23" stroke="#BEBEBE"/>
<rect x="100.900" y="797" width="68.300" height="23.500" fill="#DA9694"/>
<path d="M170.500 797v23M225 797v23M288.500 797v23M585.500 797v23M680 797v23" stroke="#BEBEBE"/>
<rect x="226" y="797" width="61" height="23.500" fill="#558ED5"/>
<rect x="290.600" y="797" width="109" height="23.500" fill="#FF0000"/>
<rect x="401.800" y="794" width="90.600" height="26" fill="#fff" stroke="#BEBEBE"/><rect x="401.800" y="819" width="90.600" height="2" fill="#217346"/>
<rect x="494" y="797" width="90.400" height="23.500" fill="#00B0F0"/>
<rect x="681.700" y="797" width="154.300" height="23.500" fill="#FFC000"/>
<rect x="840" y="797" width="94" height="23.500" fill="#00B050"/>
<rect x="938.300" y="797" width="78.700" height="23.500" fill="#953735"/>
<rect x="1021" y="797" width="89" height="23.500" fill="#000"/>
<rect x="1114" y="797" width="107" height="23.500" fill="#E36C0A"/>
<rect x="1225" y="797" width="139" height="23.500" fill="#7030A0"/>
<rect x="1369" y="797" width="7" height="23.500" fill="#000"/>
<text class="tb" x="110.700" y="812.500" textLength="47.800" lengthAdjust="spacingAndGlyphs" style="fill:#4A2322">REKAP</text>
<text class="tb" x="183" y="812.500" textLength="29" lengthAdjust="spacingAndGlyphs" style="fill:#555">RAB</text>
<text class="tb" x="236.600" y="812.500" textLength="39.400" lengthAdjust="spacingAndGlyphs" style="fill:#14305A">P.PER</text>
<text class="tb" x="302.700" y="812.500" textLength="81.300" lengthAdjust="spacingAndGlyphs" style="fill:#fff">P.PONDASI</text>
<text class="tb" x="413" y="812.500" textLength="68" lengthAdjust="spacingAndGlyphs" style="fill:#217346;font-weight:700">P.BETON</text>
<text class="tb" x="505" y="812.500" textLength="66.400" lengthAdjust="spacingAndGlyphs" style="fill:#073A55">P.LANTAI</text>
<text class="tb" x="599" y="812.500" textLength="67" lengthAdjust="spacingAndGlyphs" style="fill:#555">P. KUSEN</text>
<text class="tb" x="696" y="812.500" textLength="125" lengthAdjust="spacingAndGlyphs" style="fill:#4D3A00">P.DIN &amp; PLASTER</text>
<text class="tb" x="850.700" y="812.500" textLength="72" lengthAdjust="spacingAndGlyphs" style="fill:#03361A">P.PLAFON</text>
<text class="tb" x="950" y="812.500" textLength="55" lengthAdjust="spacingAndGlyphs" style="fill:#F3DEDE">P. ATAP</text>
<text class="tb" x="1032" y="812.500" textLength="66" lengthAdjust="spacingAndGlyphs" style="fill:#fff">P.LISTRIK</text>
<text class="tb" x="1126" y="812.500" textLength="82.500" lengthAdjust="spacingAndGlyphs" style="fill:#FFE8D8">P.SANITAIR</text>
<text class="tb" x="1237" y="812.500" textLength="114" lengthAdjust="spacingAndGlyphs" style="fill:#E8DCF2">P.PENGECATAN</text>
<g fill="#217346"><rect x="1383" y="810" width="2.500" height="2.500"/><rect x="1388.500" y="810" width="2.500" height="2.500"/><rect x="1394" y="810" width="2.500" height="2.500"/></g>
<circle cx="1418" cy="809" r="8" fill="none" stroke="#777" stroke-width="1.300"/><path d="M1413 809h10M1418 804v10" stroke="#666" stroke-width="1.300"/>
<circle cx="1446" cy="804" r="1.100" fill="#999"/><circle cx="1446" cy="809" r="1.100" fill="#999"/><circle cx="1446" cy="814" r="1.100" fill="#999"/>
<rect x="1462" y="798" width="20" height="20" fill="#fff" stroke="#D8D8D8"/><path d="M1474.500 803.500v10l-5-5z" fill="#555"/>
<rect x="1483" y="798" width="68" height="20" fill="#fff" stroke="#D8D8D8"/>
<rect x="1556" y="798" width="20" height="20" fill="#fff" stroke="#D8D8D8"/><path d="M1563.500 803.500v10l5-5z" fill="#555"/>

<!-- status bar -->
<rect y="823" width="1600" height="27" fill="#F1F1F1"/>
<text x="6" y="841" style="font-size:14.500px;fill:#555" textLength="35.500" lengthAdjust="spacingAndGlyphs">Ready</text>
<rect x="1349" y="823" width="38" height="27" fill="#C6C6C6"/>
<path d="M1285.500 828.500h15v15h-15zM1290.500 828.500v15M1295.500 828.500v15M1285.500 833.500h15M1285.500 838.500h15" fill="none" stroke="#777"/>
<path d="M1322.500 828.500h15.500v15h-15.500z" fill="none" stroke="#888"/><path d="M1326.500 832h7.500v8h-7.500zM1328 834.500h4.500M1328 837h4.500" fill="none" stroke="#888"/>
<path d="M1360.500 828.500h15v15h-15zM1368 828.500v8.500h7.500" fill="none" stroke="#777"/>
<rect x="1391" y="835.300" width="10" height="2" fill="#666"/>
<rect x="1405" y="836" width="125" height="1" fill="#AAA"/><rect x="1454.500" y="828" width="5" height="15" fill="#666"/><rect x="1467" y="832" width="1" height="9" fill="#AAA"/>
<path d="M1534.500 836.300h11M1540 831v11" stroke="#555" stroke-width="2"/>
<text x="1559.500" y="841" style="font-size:14.500px;fill:#555" textLength="25.500" lengthAdjust="spacingAndGlyphs">85%</text>

<!-- taskbar -->
<rect y="850" width="1600" height="50" fill="#03040A"/>
<rect x="60" y="850" width="430" height="50" fill="#303030"/>
<rect x="1257" y="850" width="57" height="50" fill="#34373B"/>
<path d="M20 867l8.800-1.300v8.800h-8.800zM30.200 865.500l9.800-1.500v10.500h-9.800zM20 876h8.800v8.800l-8.800-1.300zM30.200 876h9.800v10.500l-9.800-1.500z" fill="#fff"/>
<circle cx="85" cy="875.500" r="11.500" fill="none" stroke="#E8E8E8" stroke-width="2.800"/>
<text x="105" y="881.700" style="font-size:18.500px;fill:#9A9A9A" textLength="128.500" lengthAdjust="spacingAndGlyphs">Ask me anything</text>
<path d="M461 866.500h6v12a3 3 0 0 1-6 0zM458 875v3a6 6 0 0 0 12 0v-3M464 884v3M460 887.500h8" fill="none" stroke="#8A8A8A" stroke-width="1.400"/>
<path d="M513.500 867.500h14v17h-14zM509 869v14M532 869v14" fill="none" stroke="#fff" stroke-width="1.400"/>
<!-- file explorer -->
<path d="M569.500 865h10l3 3h13.500v20h-26.500z" fill="#F7D36E"/><rect x="569.500" y="871" width="26.500" height="17" fill="#FBE49C"/><rect x="578" y="879" width="9" height="9.500" fill="#2B9FDA"/><rect x="580" y="884" width="5" height="4.500" fill="#FBE49C"/>
<!-- edge -->
<path d="M631.500 877h20.500c.5-8-4-13-10-13-6.500 0-11 5.500-11 12 0 7.500 5.500 11.500 11.500 11.500 3.500 0 6.500-1 9-2.500" fill="none" stroke="#0A78D7" stroke-width="4.600"/>
<!-- chrome -->
<circle cx="700.700" cy="875" r="14" fill="#DB4437"/><path d="M700.700 875l-12.100 7a14 14 0 0 0 19.100 5.100z" fill="#0F9D58"/><path d="M700.700 875l12.100-7a14 14 0 0 1-5.100 19.100z" fill="#F4B400"/><circle cx="700.700" cy="875" r="6.500" fill="#fff"/><circle cx="700.700" cy="875" r="5" fill="#4285F4"/>
<!-- firefox -->
<circle cx="760" cy="875" r="14" fill="#2C4F8C"/><circle cx="763" cy="871" r="6" fill="#E8A23A"/>
<path d="M752 863c-6 5-7 13-4 18 4 8 14 10 21 6 6-4 8-11 5-17-1 5-3 7-6 8-5 2-10 1-12-3-2-3-1-5 1-7-3 0-5-2-5-5z" fill="#E8672B"/>
<!-- uc -->
<rect x="805.500" y="861" width="27" height="28" rx="6" fill="#EE7A1A"/><path d="M815 866c7-1 11 3 11 8 0 3-2 4-4 5" fill="none" stroke="#fff" stroke-width="2.400"/><path d="M811 884a7 7 0 0 1 14 0M815 884a3 3 0 0 1 6 0" fill="none" stroke="#fff" stroke-width="1.800"/><circle cx="816" cy="874" r="2.200" fill="#fff"/>
<!-- notepad -->
<path d="M864 884l7-21 16 3-3 22z" fill="#6FA7B8"/><path d="M871 863l16 3-2 7-16-4z" fill="#DDE9EE"/><path d="M884 888l3-22 2 20z" fill="#E9F2F5"/>
<!-- corel -->
<rect x="921" y="860" width="30" height="30" fill="#67AE4B"/><path d="M924 864l15 23M928 860l14 22M936 860l8 18M947 860l-4 16" stroke="#fff" stroke-width="1.300" fill="none"/><path d="M924 864l5 12 9 10z" fill="#fff"/>
<!-- calculator -->
<rect x="983" y="860" width="22" height="30" fill="#fff"/><rect x="985.500" y="862.500" width="17" height="5" fill="#111"/><g fill="#222"><rect x="986" y="871" width="4" height="3"/><rect x="992" y="871" width="4" height="3"/><rect x="998" y="871" width="4" height="3"/><rect x="986" y="877" width="4" height="3"/><rect x="992" y="877" width="4" height="3"/><rect x="998" y="877" width="4" height="3"/><rect x="986" y="883" width="4" height="3"/><rect x="992" y="883" width="4" height="3"/><rect x="998" y="883" width="4" height="3"/></g>
<!-- gom -->
<rect x="1038" y="860" width="30" height="30" rx="6" fill="#E92A22"/><circle cx="1048" cy="876" r="6.500" fill="#fff"/><circle cx="1048" cy="876" r="2.500" fill="#E92A22"/><circle cx="1042" cy="867.500" r="2" fill="#fff"/><circle cx="1048" cy="865.500" r="2.200" fill="#fff"/><circle cx="1054" cy="867.500" r="2" fill="#fff"/><rect x="1055" y="876" width="4" height="13" fill="#C8C8C8"/><rect x="1061" y="878" width="4" height="11" fill="#C8C8C8"/>
<!-- pen -->
<rect x="1098" y="868" width="25" height="21" fill="#EFEFEF"/><path d="M1103 884l15-20 5-3-1 8-13 15z" fill="#3C9D6C"/><path d="M1110 876l6-8 3 4z" fill="#D9A020"/><path d="M1101 886l7-3-4-2z" fill="#3C78B4"/>
<!-- photos -->
<rect x="1156" y="862" width="26" height="26" fill="#fff" stroke="#fff" stroke-width="1"/><rect x="1158" y="864.500" width="22" height="21" fill="#05060B"/><path d="M1158 881l8-10 6 6 3-3 5 5v6h-22z" fill="#fff"/>
<!-- paint -->
<ellipse cx="1226" cy="875" rx="14.500" ry="12" fill="#BCD3E3"/><circle cx="1218" cy="876" r="2.500" fill="#E0483A"/><circle cx="1222" cy="870" r="2.500" fill="#4FB34F"/><circle cx="1230" cy="869" r="2.500" fill="#EBC43A"/><circle cx="1222" cy="881" r="2.500" fill="#3C78C8"/><path d="M1227 888l11-25" stroke="#E9A24A" stroke-width="2.600"/>
<!-- excel -->
<path d="M1272 864l15-3v30l-15-3z" fill="#1D6F42"/><rect x="1287" y="865" width="11" height="22" fill="#fff"/><path d="M1289 869h7M1289 873h7M1289 877h7M1289 881h7M1292 867v18" stroke="#1D6F42" stroke-width="1.300"/>
<text x="1274.500" y="881" style="font-size:15px;font-weight:700;fill:#fff">X</text>
<!-- running underline -->
<g fill="#76B9ED"><rect x="559" y="897" width="48" height="3"/><rect x="677.500" y="897" width="47.500" height="3"/><rect x="737" y="897" width="47" height="3"/><rect x="854" y="897" width="48" height="3"/><rect x="912" y="897" width="47" height="3"/><rect x="1029" y="897" width="47" height="3"/><rect x="1087" y="897" width="47" height="3"/><rect x="1146" y="897" width="47" height="3"/><rect x="1204" y="897" width="47" height="3"/><rect x="1257" y="897" width="57" height="3"/></g>
<!-- tray -->
<path d="M1326 880l7.500-7.500 7.500 7.500" fill="none" stroke="#fff" stroke-width="1.300"/>
<path d="M1355 868v6M1359 868v6M1353 874h8v3l-2 3h-4l-2-3zM1357 880v5" fill="none" stroke="#fff" stroke-width="1.200"/><rect x="1359.500" y="871" width="18.500" height="12" fill="none" stroke="#fff" stroke-width="1.200"/><rect x="1360" y="877" width="8" height="6" fill="#fff"/><rect x="1378.500" y="875" width="1.500" height="4" fill="#fff"/>
<path d="M1387 883a13 13 0 0 1 16-13M1391 884a8 8 0 0 1 10-9M1395 884a4 4 0 0 1 5-4" fill="none" stroke="#A8A8A8" stroke-width="1.300"/><circle cx="1400" cy="884" r="1.500" fill="#fff"/>
<path d="M1414 872h4l5-5v18l-5-5h-4zM1426 872a5 5 0 0 1 0 8M1429 869a9 9 0 0 1 0 14M1432 867a12 12 0 0 1 0 18" fill="none" stroke="#E8E8E8" stroke-width="1.200"/>
<text x="1468.700" y="869.300" style="font-size:16.500px;fill:#fff" textLength="34.600" lengthAdjust="spacingAndGlyphs">17.24</text>
<text x="1446.700" y="892" style="font-size:16.500px;fill:#fff" textLength="77.300" lengthAdjust="spacingAndGlyphs">02/04/2017</text>
<path d="M1549 866h19.500v15h-7l-2.500 3.500-2.500-3.500h-7.500z" fill="none" stroke="#fff" stroke-width="1.400"/>
<rect x="1593.500" y="850" width="1.500" height="50" fill="#3A3A3A"/>
</svg>
</body></html>
